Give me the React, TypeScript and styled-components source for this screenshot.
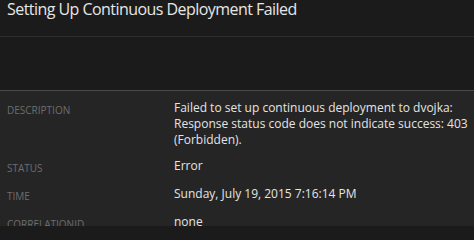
import React from "react";
import styled, { createGlobalStyle } from "styled-components";

const GlobalStyle = createGlobalStyle`
  html, body {
    margin: 0;
    padding: 0;
    background: #1b1b1b;
    overflow: hidden;
  }
  body {
    font-family: "Open Sans", "Noto Sans", sans-serif;
  }
`;

const Panel = styled.div`
  width: 474px;
  height: 226px;
  display: flex;
  flex-direction: column;
  background: #1b1b1b;
  overflow: hidden;
`;

const Header = styled.header`
  height: 36px;
  flex: none;
  padding-left: 7px;
  border-bottom: 1px solid #2d2d2d;
`;

const Title = styled.h1`
  margin: 0;
  font-size: 16px;
  line-height: 18px;
  font-weight: 400;
  letter-spacing: -0.55px;
  color: #e6e6e6;
  white-space: nowrap;
`;

const Band = styled.div`
  height: 53px;
  flex: none;
`;

const Details = styled.dl`
  flex: 1;
  margin: 0;
  padding: 9px 0 0 7px;
  background: #252525;
  border-top: 1px solid #4b4b4b;
  display: grid;
  grid-template-columns: 167px 1fr;
  row-gap: 10px;
  align-content: start;
`;

const Label = styled.dt`
  margin: 0;
  padding-top: 2px;
  font-size: 10px;
  line-height: 16px;
  color: #6d6d6d;
  text-transform: uppercase;
  white-space: nowrap;
`;

const Value = styled.dd`
  margin: 0;
  font-size: 12px;
  line-height: 16px;
  color: #e4e4e4;
`;

const rows: { label: string; value: string }[] = [
  {
    label: "Description",
    value:
      "Failed to set up continuous deployment to dvojka: Response status code does not indicate success: 403 (Forbidden).",
  },
  { label: "Status", value: "Error" },
  { label: "Time", value: "Sunday, July 19, 2015 7:16:14 PM" },
  { label: "CorrelationId", value: "none" },
];

const App: React.FC = () => {
  return (
    <>
      <GlobalStyle />
      <Panel>
        <Header>
          <Title>Setting Up Continuous Deployment Failed</Title>
        </Header>
        <Band />
        <Details>
          {rows.map((row) => (
            <React.Fragment key={row.label}>
              <Label>{row.label}</Label>
              <Value>{row.value}</Value>
            </React.Fragment>
          ))}
        </Details>
      </Panel>
    </>
  );
};

export default App;
